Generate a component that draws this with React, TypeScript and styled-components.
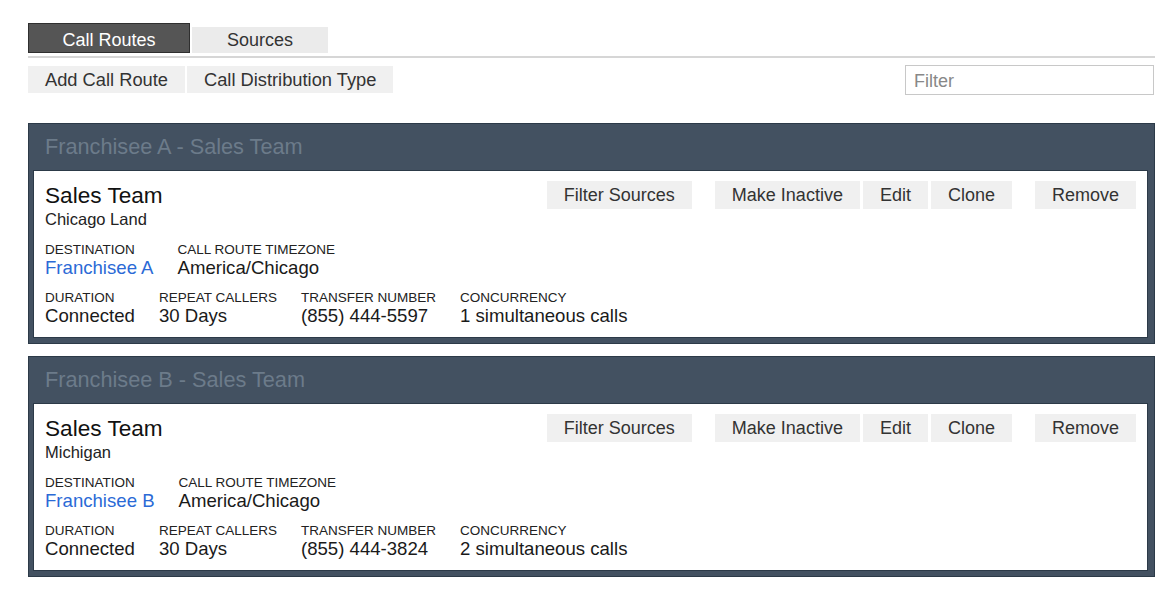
import styled, { createGlobalStyle } from 'styled-components'

const GlobalStyle = createGlobalStyle`
  body {
    margin: 0;
    background: #fff;
    font-family: "Liberation Sans", Helvetica, Arial, sans-serif;
    color: #222;
  }
`

const Page = styled.div`
  padding: 23px 20px 20px 28px;
`

const TabBar = styled.div`
  display: flex;
  align-items: flex-end;
  gap: 2px;
  border-bottom: 2px solid #d6d6d6;
  padding-bottom: 3px;
`

const Tab = styled.div<{ $active?: boolean }>`
  box-sizing: border-box;
  display: flex;
  align-items: center;
  justify-content: center;
  font-size: 18px;
  width: ${p => (p.$active ? 162 : 136)}px;
  height: ${p => (p.$active ? 30 : 26)}px;
  padding-top: ${p => (p.$active ? 4 : 1)}px;
  background: ${p => (p.$active ? '#555' : '#ebebeb')};
  color: ${p => (p.$active ? '#fff' : '#333')};
  border: ${p => (p.$active ? '1px solid #2f2f2f' : 'none')};
`

const Toolbar = styled.div`
  display: flex;
  align-items: flex-start;
  margin-top: 8px;
`

const ToolButton = styled.div`
  display: flex;
  align-items: center;
  height: 27px;
  padding: 0 17px;
  margin-right: 2px;
  background: #f0f0f0;
  color: #333;
  font-size: 18.3px;
`

const FilterInput = styled.input`
  box-sizing: border-box;
  margin-left: auto;
  margin-right: 1px;
  margin-top: -1px;
  width: 249px;
  height: 30px;
  border: 1px solid #c8c8c8;
  padding: 2px 8px 0;
  font-family: inherit;
  font-size: 18px;
  color: #333;
  outline: none;
  &::placeholder {
    color: #888;
  }
`

const Panels = styled.div`
  margin-top: 28px;
  display: flex;
  flex-direction: column;
  gap: 12px;
`

const Panel = styled.div`
  border: 1px solid #2c3a48;
  background: #435161;
  padding: 0 6px 5px 4px;
`

const PanelHeader = styled.div`
  height: 46px;
  display: flex;
  align-items: center;
  padding-left: 12px;
  color: #6c7b8a;
  font-size: 21.7px;
`

const Card = styled.div`
  background: #fff;
  border: 1px solid #2c3a48;
  padding: 12px 11px 11px 11px;
`

const CardTop = styled.div`
  display: flex;
  align-items: flex-start;
  justify-content: space-between;
`

const Title = styled.div`
  font-size: 22.6px;
  line-height: 26px;
  color: #111;
`

const Subtitle = styled.div`
  font-size: 16.5px;
  line-height: 20px;
  color: #222;
`

const Actions = styled.div`
  display: flex;
  margin-top: -2px;
`

const ActionButton = styled.div<{ $gap?: boolean }>`
  display: flex;
  align-items: center;
  height: 28px;
  padding: 0 17px;
  margin-left: ${p => (p.$gap ? 23 : 3)}px;
  background: #f0f0f0;
  color: #333;
  font-size: 18px;
`

const DetailRow = styled.div<{ $first?: boolean }>`
  display: flex;
  margin-top: ${p => (p.$first ? 13 : 12)}px;
`

const Detail = styled.div`
  margin-right: 24px;
`

const Label = styled.div`
  font-size: 13.5px;
  line-height: 16px;
  color: #222;
`

const Value = styled.div<{ $link?: boolean }>`
  font-size: 18.6px;
  line-height: 20px;
  color: ${p => (p.$link ? '#2b6ad6' : '#1a1a1a')};
`

type Route = {
  franchisee: string
  region: string
  transfer: string
  concurrency: number
}

const routes: Route[] = [
  { franchisee: 'Franchisee A', region: 'Chicago Land', transfer: '(855) 444-5597', concurrency: 1 },
  { franchisee: 'Franchisee B', region: 'Michigan', transfer: '(855) 444-3824', concurrency: 2 },
]

const RoutePanel = ({ route }: { route: Route }) => (
  <Panel>
    <PanelHeader>{route.franchisee} - Sales Team</PanelHeader>
    <Card>
      <CardTop>
        <div>
          <Title>Sales Team</Title>
          <Subtitle>{route.region}</Subtitle>
        </div>
        <Actions>
          <ActionButton $gap>Filter Sources</ActionButton>
          <ActionButton $gap>Make Inactive</ActionButton>
          <ActionButton>Edit</ActionButton>
          <ActionButton>Clone</ActionButton>
          <ActionButton $gap>Remove</ActionButton>
        </Actions>
      </CardTop>
      <DetailRow $first>
        <Detail>
          <Label>DESTINATION</Label>
          <Value $link>{route.franchisee}</Value>
        </Detail>
        <Detail>
          <Label>CALL ROUTE TIMEZONE</Label>
          <Value>America/Chicago</Value>
        </Detail>
      </DetailRow>
      <DetailRow>
        <Detail>
          <Label>DURATION</Label>
          <Value>Connected</Value>
        </Detail>
        <Detail>
          <Label>REPEAT CALLERS</Label>
          <Value>30 Days</Value>
        </Detail>
        <Detail>
          <Label>TRANSFER NUMBER</Label>
          <Value>{route.transfer}</Value>
        </Detail>
        <Detail>
          <Label>CONCURRENCY</Label>
          <Value>{route.concurrency} simultaneous calls</Value>
        </Detail>
      </DetailRow>
    </Card>
  </Panel>
)

export default function App() {
  return (
    <>
      <GlobalStyle />
      <Page>
        <TabBar>
          <Tab $active>Call Routes</Tab>
          <Tab>Sources</Tab>
        </TabBar>
        <Toolbar>
          <ToolButton>Add Call Route</ToolButton>
          <ToolButton>Call Distribution Type</ToolButton>
          <FilterInput placeholder="Filter" />
        </Toolbar>
        <Panels>
          {routes.map(r => (
            <RoutePanel key={r.franchisee} route={r} />
          ))}
        </Panels>
      </Page>
    </>
  )
}
